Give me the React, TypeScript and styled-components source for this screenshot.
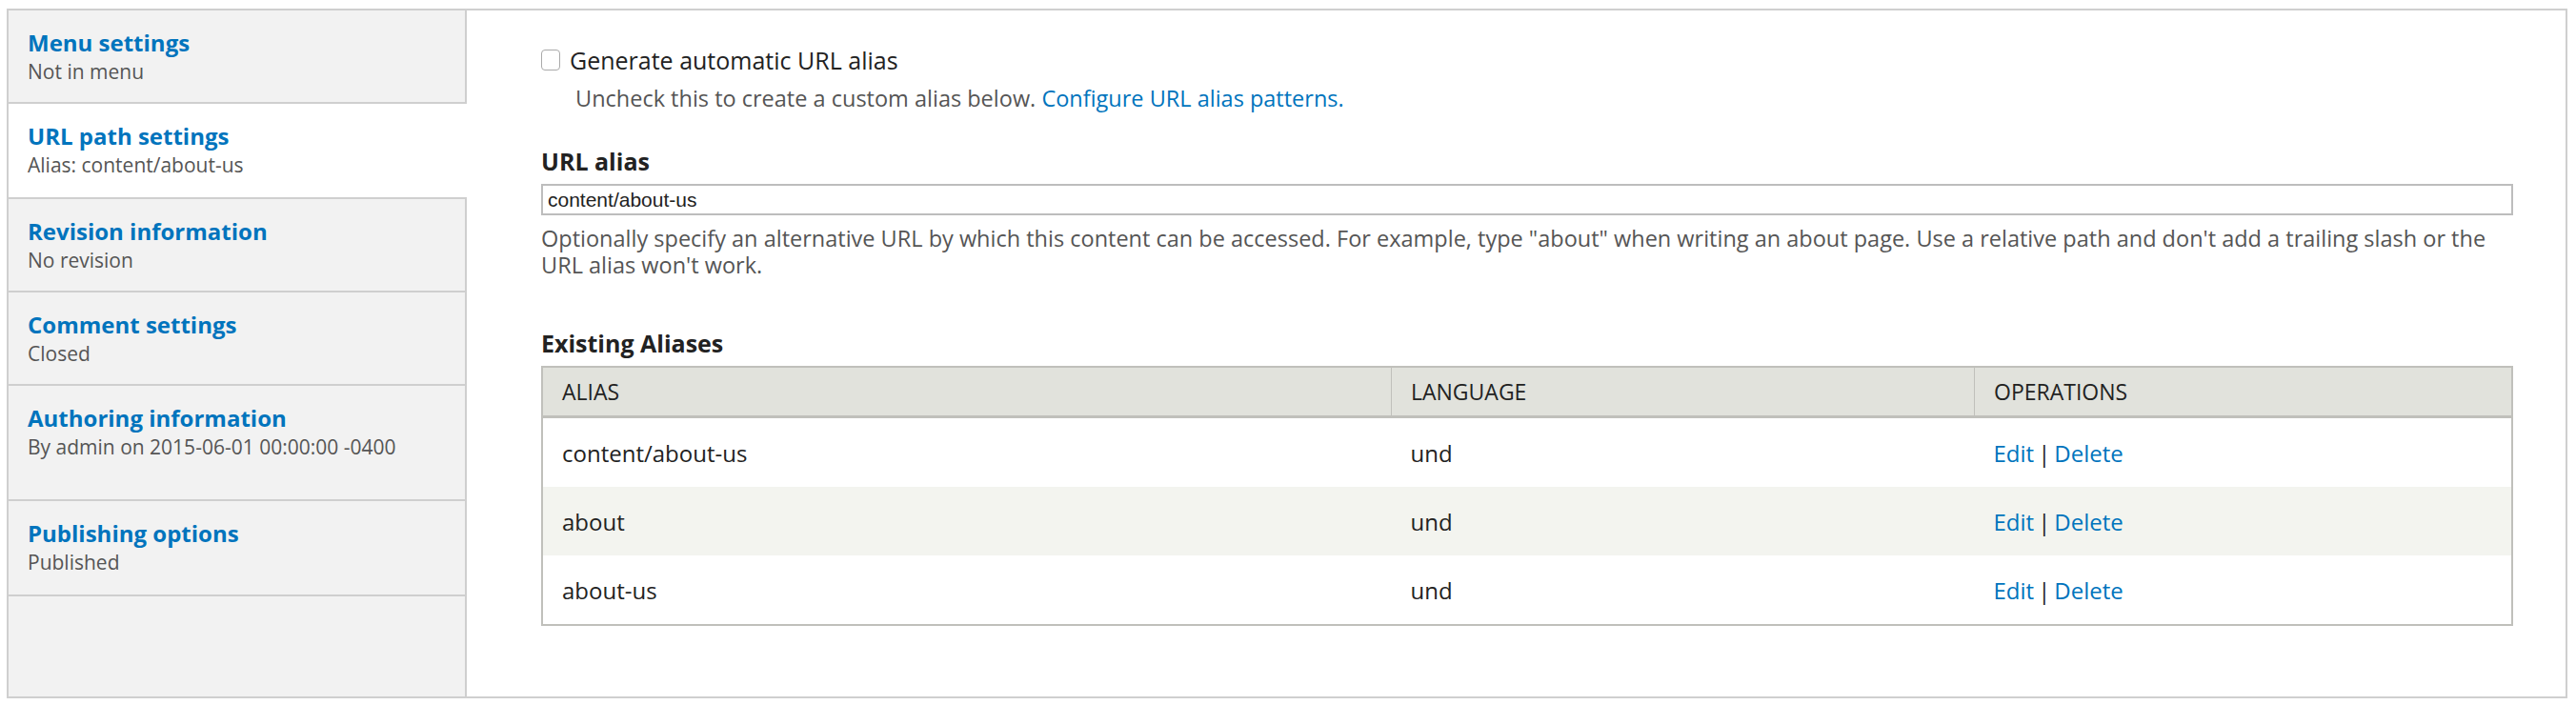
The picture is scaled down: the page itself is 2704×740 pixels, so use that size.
import React from "react";
import styled, { createGlobalStyle } from "styled-components";

const Global = createGlobalStyle`
  html, body { margin: 0; padding: 0; background: #fff; }
  body { font-family: "Open Sans", "Noto Sans", sans-serif; color: #222; font-size: 24px; }
`;

const Frame = styled.div`
  margin: 9px 9px 0 7px;
  height: 724px;
  box-sizing: border-box;
  border: 2px solid #cfcfcf;
  display: flex;
`;

const Side = styled.div`
  width: 479px;
  flex-shrink: 0;
  background: #f2f2f2;
  border-right: 2px solid #cfcfcf;
  display: flex;
  flex-direction: column;
`;

const Tab = styled.div<{ $active?: boolean; $h: number }>`
  height: ${(p) => p.$h}px;
  box-sizing: border-box;
  padding: 18px 60px 0 20px;
  border-bottom: 2px solid #cfcfcf;
  background: ${(p) => (p.$active ? "#fff" : "#f2f2f2")};
  margin-right: ${(p) => (p.$active ? "-2px" : "0")};
  position: relative;
`;

const TabTitle = styled.div`
  color: #0074bd;
  font-weight: 700;
  font-size: 24px;
  line-height: 32px;
`;

const TabSummary = styled.div`
  color: #555;
  font-size: 21px;
  line-height: 22px;
  margin-top: 3px;
`;

const Main = styled.div`
  flex: 1;
  padding: 36px 55px 0 78px;
`;

const CheckRow = styled.label`
  display: flex;
  align-items: center;
  gap: 10px;
  font-size: 25px;
  line-height: 32px;
`;

const Box = styled.span`
  width: 20px;
  height: 22px;
  border: 1px solid #aaa;
  border-radius: 4px;
  background: #fff;
  box-sizing: border-box;
`;

const Help = styled.div<{ $indent?: boolean }>`
  color: #555;
  font-size: 23.5px;
  line-height: 28px;
  margin-left: ${(p) => (p.$indent ? "36px" : "0")};
`;

const Link = styled.a`
  color: #0074bd;
  text-decoration: none;
`;

const Label = styled.div<{ $top: number }>`
  font-weight: 700;
  font-size: 25px;
  line-height: 32px;
  margin-top: ${(p) => p.$top}px;
`;

const Input = styled.div`
  height: 33px;
  box-sizing: border-box;
  border: 2px solid #bdbdbd;
  font-family: "Liberation Sans", Arial, sans-serif;
  font-size: 21px;
  line-height: 29px;
  padding-left: 5px;
  margin: 8px 0 10px;
`;

const Table = styled.table`
  width: 100%;
  border-collapse: collapse;
  border: 2px solid #c0c0bb;
  margin-top: 8px;
  table-layout: fixed;
`;

const Th = styled.th<{ $w?: number }>`
  ${(p) => (p.$w ? `width: ${p.$w}px;` : "")}
  background: #e1e2dc;
  text-align: left;
  font-weight: 400;
  font-size: 23px;
  height: 50px;
  padding: 0 20px;
  border-bottom: 3px solid #c0c0bb;
  border-left: 1px solid #c0c0bb;
`;

const Tr = styled.tr<{ $odd?: boolean }>`
  background: ${(p) => (p.$odd ? "#f3f4ef" : "#fff")};
`;

const Td = styled.td`
  height: 72px;
  padding: 0 20px;
  font-size: 24px;
`;

const Sep = styled.span`
  margin: 0 4px;
`;

const tabs = [
  { t: "Menu settings", s: "Not in menu", h: 98 },
  { t: "URL path settings", s: "Alias: content/about-us", h: 100, a: true },
  { t: "Revision information", s: "No revision", h: 98 },
  { t: "Comment settings", s: "Closed", h: 98 },
  { t: "Authoring information", s: "By admin on 2015-06-01 00:00:00 -0400", h: 121 },
  { t: "Publishing options", s: "Published", h: 100 },
];

const rows = ["content/about-us", "about", "about-us"];

export default function App() {
  return (
    <>
      <Global />
      <Frame>
        <Side>
          {tabs.map((x) => (
            <Tab key={x.t} $active={x.a} $h={x.h}>
              <TabTitle>{x.t}</TabTitle>
              <TabSummary>{x.s}</TabSummary>
            </Tab>
          ))}
        </Side>
        <Main>
          <CheckRow>
            <Box />
            Generate automatic URL alias
          </CheckRow>
          <Help $indent style={{ marginTop: 10 }}>
            Uncheck this to create a custom alias below. <Link>Configure URL alias patterns.</Link>
          </Help>
          <Label $top={36}>URL alias</Label>
          <Input>content/about-us</Input>
          <Help>
            Optionally specify an alternative URL by which this content can be accessed. For example, type "about" when writing an about page. Use a relative path and don't add a trailing slash or the URL alias won't work.
          </Help>
          <Label $top={52}>Existing Aliases</Label>
          <Table>
            <thead>
              <tr>
                <Th $w={850}>ALIAS</Th>
                <Th $w={571}>LANGUAGE</Th>
                <Th>OPERATIONS</Th>
              </tr>
            </thead>
            <tbody>
              {rows.map((r, i) => (
                <Tr key={r} $odd={i === 1}>
                  <Td>{r}</Td>
                  <Td>und</Td>
                  <Td>
                    <Link>Edit</Link>
                    <Sep>|</Sep>
                    <Link>Delete</Link>
                  </Td>
                </Tr>
              ))}
            </tbody>
          </Table>
        </Main>
      </Frame>
    </>
  );
}
